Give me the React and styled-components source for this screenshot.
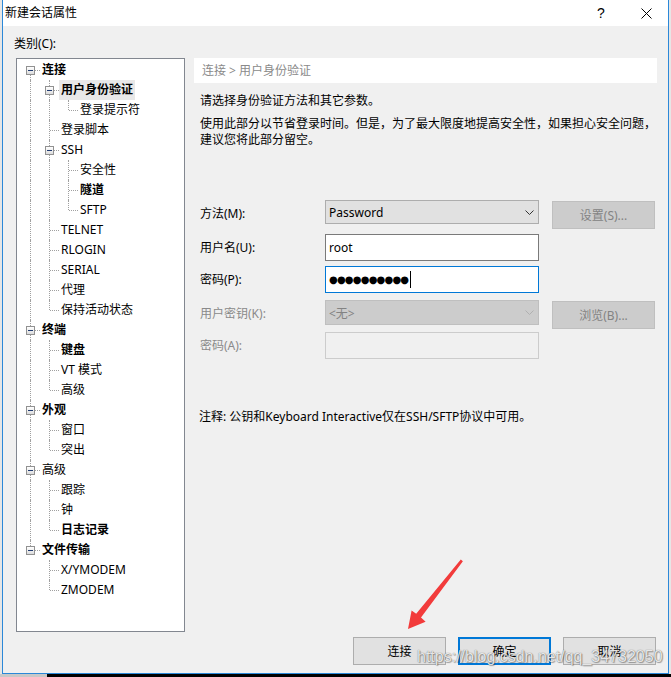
import React from 'react';
import styled, { createGlobalStyle } from 'styled-components';

const GlobalStyle = createGlobalStyle`
  html, body { margin: 0; padding: 0; }
  body {
    background: #e6e6e6;
    font-family: "Noto Sans", "Noto Sans CJK SC", sans-serif;
    font-size: 12px;
    color: #000;
    overflow: hidden;
  }
`;

const Page = styled.div`
  position: relative;
  width: 671px;
  height: 677px;
  display: flex;
  flex-direction: column;
`;

const Window = styled.div`
  margin-left: 2px;
  width: 667px;
  height: 674px;
  box-sizing: border-box;
  border: 1px solid #2b88d8;
  border-top: none;
  display: flex;
  flex-direction: column;
  background: #f0f0f0;
`;

const DesktopStrip = styled.div`
  height: 3px;
  background: linear-gradient(to right, #c8c8c8 47px, #000 47px);
`;

const TitleBar = styled.div`
  height: 26px;
  flex: none;
  background: #fff;
  display: flex;
  align-items: center;
`;

const Title = styled.div`
  flex: 1;
  padding-left: 2px;
  line-height: 26px;
`;

const TitleButton = styled.div`
  width: ${p => p.$w}px;
  height: 26px;
  display: flex;
  align-items: center;
  justify-content: center;
  font-family: "Liberation Sans", sans-serif;
  font-size: 14px;
`;

const Body = styled.div`
  flex: 1;
  display: flex;
  flex-direction: column;
  padding: 10px 11px 8px 11px;
`;

const CategoryLabel = styled.div`
  line-height: 16px;
`;

const MainRow = styled.div`
  display: flex;
  gap: 9px;
  margin-top: 6px;
  height: 574px;
`;

const TreeBox = styled.div`
  flex: none;
  width: 169px;
  margin-left: 2px;
  box-sizing: border-box;
  border: 1px solid #828790;
  background: #fff;
  padding: 1px 0 0 4px;
`;

const TreeRow = styled.div`
  display: flex;
  height: 20px;
`;

const Guide = styled.span`
  position: relative;
  flex: none;
  width: 19px;
  height: 20px;
  &::before {
    content: '';
    display: ${p => (p.$v === 'none' ? 'none' : 'block')};
    position: absolute;
    left: 9px;
    top: ${p => (p.$v === 'bottom' ? '10px' : '0')};
    height: ${p => (p.$v === 'full' ? '20px' : '10px')};
    border-left: 1px dotted #a0a0a0;
  }
  &::after {
    content: '';
    display: ${p => (p.$branch ? 'block' : 'none')};
    position: absolute;
    left: 10px;
    top: 10px;
    width: 9px;
    border-top: 1px dotted #a0a0a0;
  }
`;

const Expander = styled.span`
  position: absolute;
  z-index: 1;
  left: 5px;
  top: 6px;
  width: 9px;
  height: 9px;
  box-sizing: border-box;
  border: 1px solid #919191;
  background: linear-gradient(#ffffff, #dcdcdc);
  &::after {
    content: '';
    position: absolute;
    left: 1px;
    top: 3px;
    width: 5px;
    height: 1px;
    background: #1f3a70;
  }
`;

const NodeLabel = styled.span`
  padding: 0 2px;
  line-height: 20px;
  height: 20px;
  white-space: nowrap;
  font-weight: ${p => (p.$bold ? 700 : 400)};
  background: ${p => (p.$selected ? '#e8e8e8' : 'transparent')};
`;

const Panel = styled.div`
  flex: 1;
  min-width: 0;
  display: flex;
  flex-direction: column;
`;

const Breadcrumb = styled.div`
  height: 25px;
  line-height: 25px;
  background: #fff;
  padding-left: 8px;
  color: #8a8a8a;
`;

const Desc = styled.div`
  padding-left: 6px;
  line-height: 16px;
  white-space: nowrap;
  margin-top: ${p => p.$mt}px;
`;

const Form = styled.div`
  display: grid;
  grid-template-columns: 112px 214px 103px;
  grid-template-rows: 34px 32px 34px 32px 27px;
  column-gap: 13px;
  padding-left: 6px;
  margin-top: 52px;
  align-items: start;
`;

const FieldLabel = styled.div`
  line-height: 27px;
  white-space: nowrap;
  color: ${p => (p.$disabled ? '#8a8a8a' : '#000')};
`;

const Combo = styled.div`
  height: ${p => p.$h}px;
  box-sizing: border-box;
  border: 1px solid ${p => (p.$disabled ? '#bfbfbf' : '#adadad')};
  background: ${p => (p.$disabled ? '#cccccc' : '#e1e1e1')};
  color: ${p => (p.$disabled ? '#838383' : '#000')};
  display: flex;
  align-items: center;
  justify-content: space-between;
  padding: 0 4px 0 3px;
`;

const TextInput = styled.div`
  height: 27px;
  box-sizing: border-box;
  border: 1px solid ${p => p.$border};
  background: ${p => (p.$disabled ? '#f0f0f0' : '#fff')};
  padding-left: 3px;
  display: flex;
  align-items: center;
`;

const Dots = styled.span`
  font-family: "DejaVu Sans", sans-serif;
  font-size: 10px;
  letter-spacing: -0.8px;
`;

const Caret = styled.span`
  width: 1px;
  height: 17px;
  background: #000;
  margin-left: 2px;
`;

const SideButton = styled.div`
  height: 28px;
  margin-top: 1px;
  box-sizing: border-box;
  border: 1px solid #bfbfbf;
  background: #cccccc;
  color: #838383;
  display: flex;
  align-items: center;
  justify-content: center;
`;

const Note = styled.div`
  padding-left: 5px;
  margin-top: 50px;
  line-height: 16px;
`;

const ButtonRow = styled.div`
  display: flex;
  justify-content: flex-end;
  gap: 12px;
  margin-top: 5px;
  margin-right: 1px;
`;

const DialogButton = styled.div`
  width: 93px;
  height: 28px;
  box-sizing: border-box;
  border: ${p => (p.$default ? '2px solid #0078d7' : '1px solid #adadad')};
  background: #e1e1e1;
  display: flex;
  align-items: center;
  justify-content: center;
`;

const Overlay = styled.svg`
  position: absolute;
  left: 0;
  top: 0;
  pointer-events: none;
`;

const Watermark = styled.div`
  position: absolute;
  left: 417px;
  top: 647px;
  font-family: "Liberation Sans", sans-serif;
  font-size: 16px;
  line-height: 20px;
  color: rgba(255, 255, 255, 0.85);
  text-shadow: 0 0 1px rgba(30, 30, 30, 0.7), 1px 1px 1px rgba(30, 30, 30, 0.35);
  white-space: nowrap;
`;

const Chevron = ({ color }) => (
  <svg width="9" height="5" viewBox="0 0 9 5">
    <polyline points="0.5,0.5 4.5,4.5 8.5,0.5" fill="none" stroke={color} strokeWidth="1" />
  </svg>
);

const CloseIcon = () => (
  <svg width="11" height="11" viewBox="0 0 11 11">
    <line x1="0.5" y1="0.5" x2="10.5" y2="10.5" stroke="#000" strokeWidth="1" />
    <line x1="10.5" y1="0.5" x2="0.5" y2="10.5" stroke="#000" strokeWidth="1" />
  </svg>
);

const tree = [
  {
    label: '连接', bold: true, children: [
      { label: '用户身份验证', bold: true, selected: true, children: [{ label: '登录提示符' }] },
      { label: '登录脚本' },
      { label: 'SSH', children: [{ label: '安全性' }, { label: '隧道', bold: true }, { label: 'SFTP' }] },
      { label: 'TELNET' },
      { label: 'RLOGIN' },
      { label: 'SERIAL' },
      { label: '代理' },
      { label: '保持活动状态' },
    ],
  },
  { label: '终端', bold: true, children: [{ label: '键盘', bold: true }, { label: 'VT 模式' }, { label: '高级' }] },
  { label: '外观', bold: true, children: [{ label: '窗口' }, { label: '突出' }] },
  { label: '高级', children: [{ label: '跟踪' }, { label: '钟' }, { label: '日志记录', bold: true }] },
  { label: '文件传输', bold: true, children: [{ label: 'X/YMODEM' }, { label: 'ZMODEM' }] },
];

function flatten(nodes, depth = 0, trail = [], out = []) {
  nodes.forEach((n, i) => {
    const last = i === nodes.length - 1;
    out.push({ ...n, depth, trail, last, first: depth === 0 && i === 0 });
    if (n.children) flatten(n.children, depth + 1, [...trail, last], out);
  });
  return out;
}

const rows = flatten(tree);

function branchMode(r) {
  if (r.first) return r.last ? 'none' : 'bottom';
  return r.last ? 'top' : 'full';
}

export default function App() {
  return (
    <Page>
      <GlobalStyle />
      <Window>
        <TitleBar>
          <Title>新建会话属性</Title>
          <TitleButton $w={46}>?</TitleButton>
          <TitleButton $w={44}><CloseIcon /></TitleButton>
        </TitleBar>
        <Body>
          <CategoryLabel>类别(C):</CategoryLabel>
          <MainRow>
            <TreeBox>
              {rows.map((r, idx) => (
                <TreeRow key={idx}>
                  {r.trail.map((ancLast, i) => (
                    <Guide key={i} $v={ancLast ? 'none' : 'full'} />
                  ))}
                  <Guide $v={branchMode(r)} $branch>
                    {r.children && <Expander />}
                  </Guide>
                  <NodeLabel $bold={r.bold} $selected={r.selected}>{r.label}</NodeLabel>
                </TreeRow>
              ))}
            </TreeBox>
            <Panel>
              <Breadcrumb>连接 &gt; 用户身份验证</Breadcrumb>
              <Desc $mt={10}>请选择身份验证方法和其它参数。</Desc>
              <Desc $mt={7}>
                使用此部分以节省登录时间。但是，为了最大限度地提高安全性，如果担心安全问题，
                <br />
                建议您将此部分留空。
              </Desc>
              <Form>
                <FieldLabel>方法(M):</FieldLabel>
                <Combo $h={24}>
                  <span>Password</span>
                  <Chevron color="#333" />
                </Combo>
                <SideButton>设置(S)...</SideButton>

                <FieldLabel>用户名(U):</FieldLabel>
                <TextInput $border="#7a7a7a">root</TextInput>
                <span />

                <FieldLabel>密码(P):</FieldLabel>
                <TextInput $border="#0078d7">
                  <Dots>●●●●●●●●●●</Dots>
                  <Caret />
                </TextInput>
                <span />

                <FieldLabel $disabled>用户密钥(K):</FieldLabel>
                <Combo $h={25} $disabled>
                  <span>&lt;无&gt;</span>
                  <Chevron color="#b0b0b0" />
                </Combo>
                <SideButton>浏览(B)...</SideButton>

                <FieldLabel $disabled>密码(A):</FieldLabel>
                <TextInput $border="#cccccc" $disabled />
                <span />
              </Form>
              <Note>注释: 公钥和Keyboard Interactive仅在SSH/SFTP协议中可用。</Note>
            </Panel>
          </MainRow>
          <ButtonRow>
            <DialogButton>连接</DialogButton>
            <DialogButton $default>确定</DialogButton>
            <DialogButton>取消</DialogButton>
          </ButtonRow>
        </Body>
      </Window>
      <DesktopStrip />
      <Overlay width="671" height="677" viewBox="0 0 671 677">
        <polygon
          points="460.8,559.6 462.9,561.2 421.0,617.4 425.6,621.8 408,629 411.6,610.4 416.2,613.8"
          fill="#f23b3b"
        />
      </Overlay>
      <Watermark>https://blog.csdn.net/qq_34732050</Watermark>
    </Page>
  );
}
